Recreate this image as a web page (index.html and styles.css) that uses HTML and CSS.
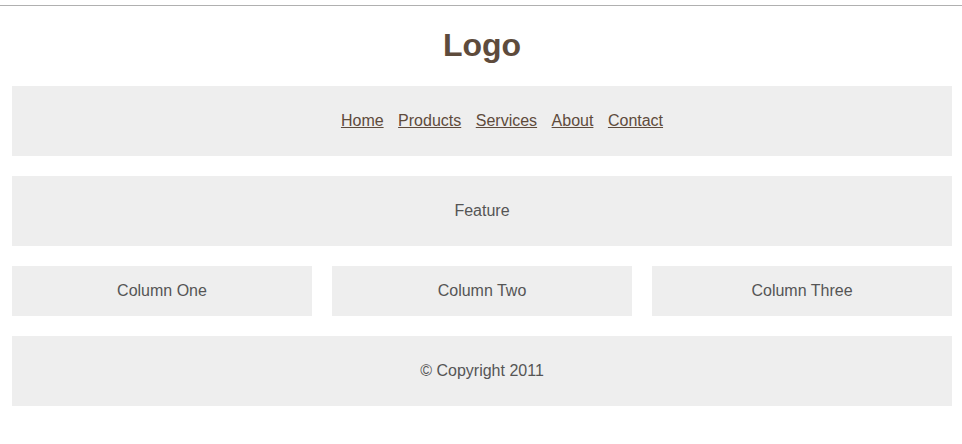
FILE: index.html
```html
<!DOCTYPE html>
<html lang="en">
<head>
    <meta charset="UTF-8">
    <meta name="viewport" content="width=device-width, initial-scale=1.0">
    <title>Logo</title>
    <link rel="stylesheet" href="styles.css">
</head>
<body>
    <div class="wrapper">
        <header class="header">
            <h1 class="logo">Logo</h1>
        </header>

        <nav class="box nav">
            <a href="#">Home</a>
            <a href="#">Products</a>
            <a href="#">Services</a>
            <a href="#">About</a>
            <a href="#">Contact</a>
        </nav>

        <section class="box feature">Feature</section>

        <div class="columns">
            <div class="box column">Column One</div>
            <div class="box column">Column Two</div>
            <div class="box column">Column Three</div>
        </div>

        <footer class="box footer">&copy; Copyright 2011</footer>
    </div>
</body>
</html>
```

FILE: styles.css
```css
body {
    font-family: "Liberation Sans", Arial, sans-serif;
    font-size: 16px;
    color: #555;
    background-color: #fff;
    margin: 0;
    padding-top: 5px;
}

.wrapper {
    border-top: 1px solid #b0b0b0;
    padding: 0 10px 0 12px;
}

.header {
    padding: 21px 0 22px;
    text-align: center;
}

.logo {
    margin: 0;
    font-size: 32px;
    line-height: 37px;
    color: #5e4b3c;
}

.box {
    background-color: #eee;
    display: flex;
    align-items: center;
    justify-content: center;
    height: 70px;
    margin-bottom: 20px;
}

.nav {
    gap: 14.5px;
    padding-left: 40px;
}

.nav a {
    color: #5e4b3c;
}

.columns {
    display: grid;
    grid-template-columns: repeat(3, 1fr);
    gap: 20px;
    margin-bottom: 20px;
}

.column {
    height: 50px;
    margin-bottom: 0;
}
```
